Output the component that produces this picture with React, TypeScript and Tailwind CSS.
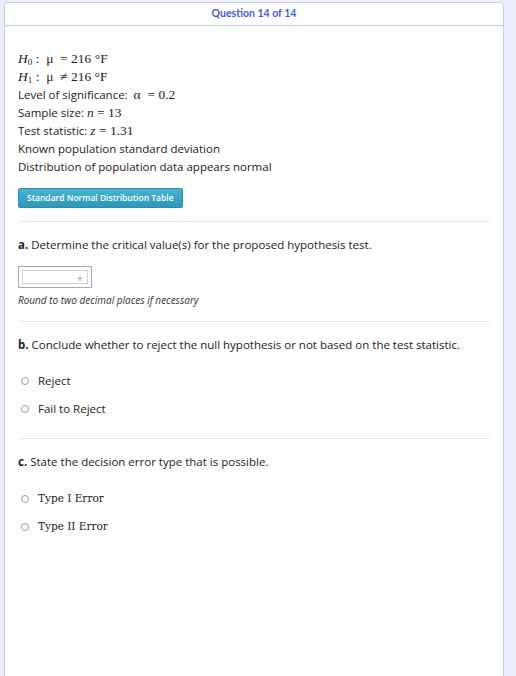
import React from "react";

const serif = { fontFamily: '"Liberation Serif", "Times New Roman", serif' };

function Radio({ label, serifLabel }: { label: string; serifLabel?: boolean }) {
  return (
    <div className="flex items-center h-[28px]">
      <span className="ml-[3px] w-[8px] h-[8px] rounded-full border border-[#9a9a9a] bg-white" />
      <span
        className="ml-[9px] text-[11.5px] text-[#222]"
        style={serifLabel ? { fontFamily: '"DejaVu Serif", serif', fontSize: "10.5px" } : undefined}
      >
        {label}
      </span>
    </div>
  );
}

export default function App() {
  return (
    <div
      className="w-[516px] h-[676px] bg-[#eceff9] pt-[2px] pl-[4px] overflow-hidden"
      style={{ fontFamily: '"Open Sans", "Noto Sans", sans-serif' }}
    >
      <div className="w-[500px] h-[700px] bg-white border border-[#c3cff0] rounded-t-[3px]">
        <div className="h-[23px] border-b border-[#bfcbe2] flex items-center justify-center">
          <span
            className="text-[10.5px] font-bold text-[#3d5be0]"
            style={{ fontFamily: "Lato, sans-serif" }}
          >
            Question 14 of 14
          </span>
        </div>
        <div className="px-[13px]">
          <div className="pt-[24px] text-[11.5px] leading-[18px] text-[#222]">
            <div style={serif} className="text-[13.5px]">
              <i>H</i>
              <sub className="text-[9px]">0</sub> :&nbsp; μ &nbsp;= 216 °F
            </div>
            <div style={serif} className="text-[13.5px]">
              <i>H</i>
              <sub className="text-[9px]">1</sub> :&nbsp; μ &nbsp;≠ 216 °F
            </div>
            <div>
              Level of significance:&nbsp; <span style={serif} className="text-[13.5px]">α &nbsp;= 0.2</span>
            </div>
            <div>
              Sample size: <span style={serif} className="text-[13.5px]"><i>n</i> = 13</span>
            </div>
            <div>
              Test statistic: <span style={serif} className="text-[13.5px]"><i>z</i> = 1.31</span>
            </div>
            <div>Known population standard deviation</div>
            <div>Distribution of population data appears normal</div>
          </div>
          <div className="mt-[12px] flex">
            <button className="h-[20px] px-[8px] rounded-[2px] bg-gradient-to-b from-[#49b3d3] to-[#2f98b9] border border-[#2a8eaf] text-white text-[8.5px] font-semibold leading-none">
              Standard Normal Distribution Table
            </button>
          </div>
          <div className="mt-[13px] border-t border-[#e6e6e6]" />
          <div className="mt-[14px] text-[11.5px] leading-[18px] text-[#222]">
            <b>a.</b> Determine the critical value(s) for the proposed hypothesis test.
          </div>
          <div className="mt-[12px] w-[74px] h-[22px] border border-[#a9a9a9] p-[3px]">
            <div className="h-full border border-[#c9d5ec] flex items-center justify-end pr-[4px] text-[#888] text-[11px] leading-none">
              +
            </div>
          </div>
          <div className="mt-[5px] text-[10px] italic text-[#333]">
            Round to two decimal places if necessary
          </div>
          <div className="mt-[13px] border-t border-[#e6e6e6]" />
          <div className="mt-[14px] text-[11.5px] leading-[18px] text-[#222]">
            <b>b.</b> Conclude whether to reject the null hypothesis or not based on the test statistic.
          </div>
          <div className="mt-[13px]">
            <Radio label="Reject" />
            <Radio label="Fail to Reject" />
          </div>
          <div className="mt-[15px] border-t border-[#e6e6e6]" />
          <div className="mt-[14px] text-[11.5px] leading-[18px] text-[#222]">
            <b>c.</b> State the decision error type that is possible.
          </div>
          <div className="mt-[14px]">
            <Radio label="Type I Error" serifLabel />
            <Radio label="Type II Error" serifLabel />
          </div>
        </div>
      </div>
    </div>
  );
}
